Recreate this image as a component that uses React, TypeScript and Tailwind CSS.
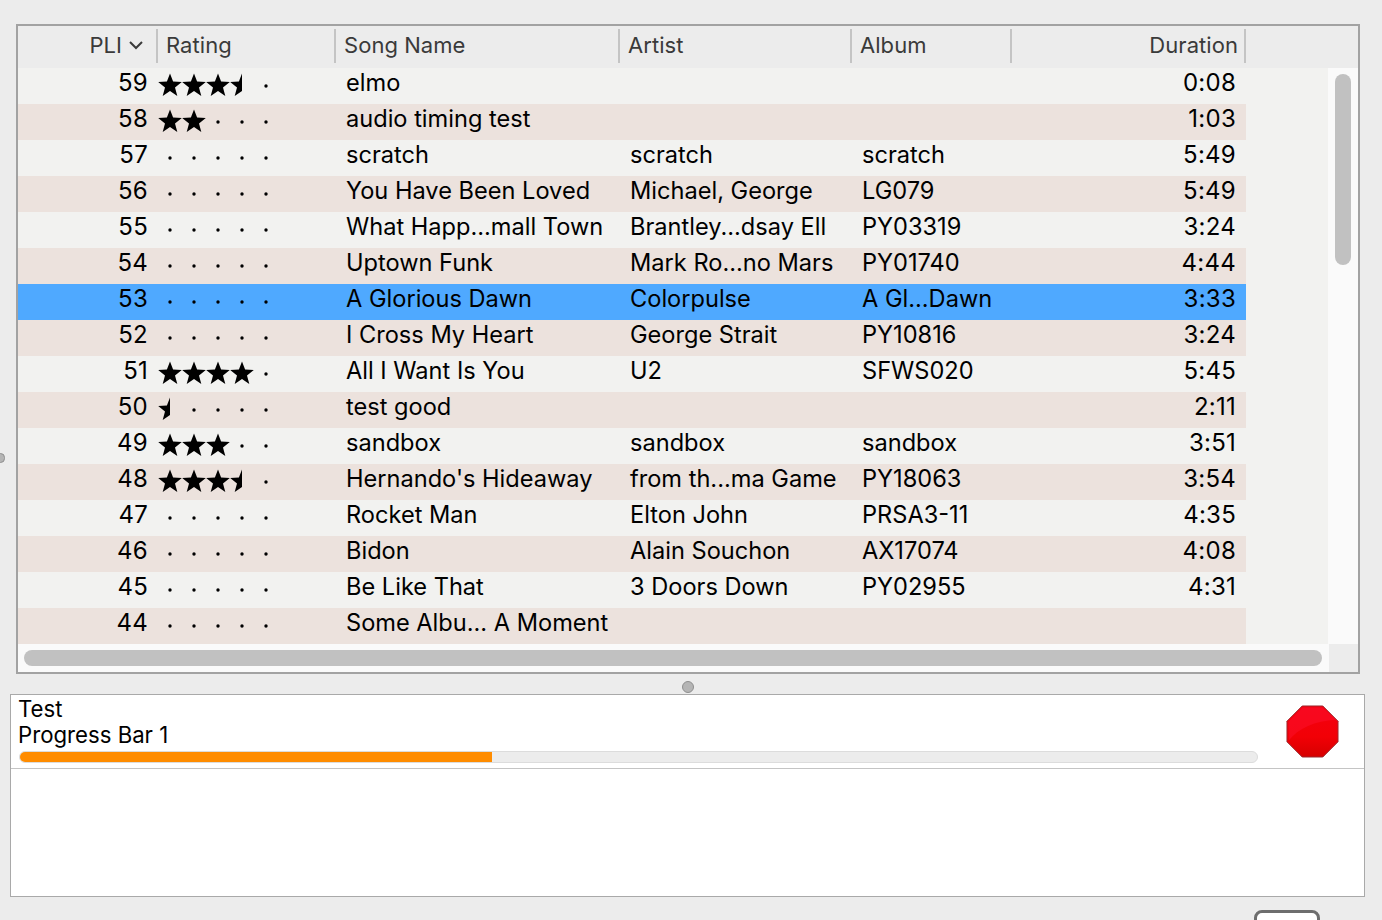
const rows: [string, number, string, string, string, string][] = [
  ["59", 3.5, "elmo", "", "", "0:08"],
  ["58", 2, "audio timing test", "", "", "1:03"],
  ["57", 0, "scratch", "scratch", "scratch", "5:49"],
  ["56", 0, "You Have Been Loved", "Michael, George", "LG079", "5:49"],
  ["55", 0, "What Happ...mall Town", "Brantley...dsay Ell", "PY03319", "3:24"],
  ["54", 0, "Uptown Funk", "Mark Ro...no Mars", "PY01740", "4:44"],
  ["53", 0, "A Glorious Dawn", "Colorpulse", "A Gl...Dawn", "3:33"],
  ["52", 0, "I Cross My Heart", "George Strait", "PY10816", "3:24"],
  ["51", 4, "All I Want Is You", "U2", "SFWS020", "5:45"],
  ["50", 0.5, "test good", "", "", "2:11"],
  ["49", 3, "sandbox", "sandbox", "sandbox", "3:51"],
  ["48", 3.5, "Hernando's Hideaway", "from th...ma Game", "PY18063", "3:54"],
  ["47", 0, "Rocket Man", "Elton John", "PRSA3-11", "4:35"],
  ["46", 0, "Bidon", "Alain Souchon", "AX17074", "4:08"],
  ["45", 0, "Be Like That", "3 Doors Down", "PY02955", "4:31"],
  ["44", 0, "Some Albu... A Moment", "", "", ""],
];

const STAR = "12,0.5 15.1,8.6 23.8,9 17,14.4 19.3,22.9 12,18.1 4.7,22.9 7,14.4 0.2,9 8.9,8.6";
const HALF = "12,0.5 12,18.1 4.7,22.9 7,14.4 0.2,9 8.9,8.6";

function RatingCell({ value }: { value: number }) {
  return (
    <div className="flex w-[120px] pt-[5px]">
      {[0, 1, 2, 3, 4].map((i) => {
        const left = value - i;
        return (
          <svg key={i} width="24" height="24" viewBox="0 0 24 24" className="shrink-0">
            {left >= 1 ? (
              <polygon points={STAR} fill="#000" />
            ) : left > 0 ? (
              <polygon points={HALF} fill="#000" />
            ) : (
              <circle cx="12" cy="13" r="1.7" fill="#000" />
            )}
          </svg>
        );
      })}
    </div>
  );
}

function HeaderCell({ label, width, right }: { label: string; width: string; right?: boolean }) {
  return (
    <div
      className={`flex h-[34px] shrink-0 items-center border-r-2 border-[#c4c4c4] pb-[2px] ${width} ${
        right ? "justify-end pr-[6px]" : "pl-2"
      }`}
    >
      {label}
    </div>
  );
}

function StopIcon() {
  return (
    <svg width="53" height="53" viewBox="0 0 54 54">
      <defs>
        <linearGradient id="stopFill" x1="0" y1="0" x2="0" y2="1">
          <stop offset="0" stopColor="#f40010" />
          <stop offset="0.6" stopColor="#f20006" />
          <stop offset="1" stopColor="#d60000" />
        </linearGradient>
      </defs>
      <polygon
        points="16.5,1 37.5,1 53,16.5 53,37.5 37.5,53 16.5,53 1,37.5 1,16.5"
        fill="url(#stopFill)"
        stroke="#9a2a30"
        strokeWidth="1"
      />
      <path d="M3 36 C12 24 30 16 51 15 L37 2.5 L17 2.5 L2.5 17 Z" fill="#ff1538" opacity="0.4" />
    </svg>
  );
}

export default function App() {
  return (
    <div
      className="relative h-[920px] w-[1382px] overflow-hidden bg-[#ececec] text-[23.6px] leading-none text-black"
      style={{ fontFamily: "Inter, 'Liberation Sans', sans-serif" }}
    >
      <div className="pl-4 pt-6">
        <div className="flex h-[650px] w-[1344px] flex-col border-2 border-[#a2a2a2] bg-[#ececec]">
          <div className="flex h-[42px] items-center pb-[2px] text-[22px] tracking-[0.05px] text-[#3a3a3a]">
            <div className="flex h-[34px] w-[140px] shrink-0 items-center justify-end gap-[6px] border-r-2 border-[#c4c4c4] pb-[2px] pr-3">
              PLI
              <svg width="16" height="10" viewBox="0 0 16 10" fill="none" stroke="#3a3a3a" strokeWidth="2">
                <path d="M2 2 L8 8 L14 2" />
              </svg>
            </div>
            <HeaderCell label="Rating" width="w-[178px]" />
            <HeaderCell label="Song Name" width="w-[284px]" />
            <HeaderCell label="Artist" width="w-[232px]" />
            <HeaderCell label="Album" width="w-[160px]" />
            <HeaderCell label="Duration" width="w-[234px]" right />
          </div>
          <div className="flex min-h-0 flex-1">
            <div className="w-[1311px] bg-[#f2f2f0]">
              {rows.map((r, i) => (
                <div
                  key={r[0]}
                  className={`flex h-9 w-[1228px] pt-[3px] ${
                    r[0] === "53" ? "bg-[#4fa9ff]" : i % 2 === 1 ? "bg-[#ece2dd]" : "bg-[#f2f2f0]"
                  }`}
                >
                  <div className="w-[130px] text-right text-[24px] tracking-[0.25px]">{r[0]}</div>
                  <div className="-mt-[3px] pl-[10px]">
                    <RatingCell value={r[1]} />
                  </div>
                  <div className="w-[352px] whitespace-nowrap pl-[68px]">{r[2]}</div>
                  <div className="w-[232px] whitespace-nowrap">{r[3]}</div>
                  <div className="w-[160px] whitespace-nowrap">{r[4]}</div>
                  <div className="w-[214px] text-right text-[24px] tracking-[0.25px]">{r[5]}</div>
                </div>
              ))}
            </div>
            <div className="flex-1 bg-[#fafafa] px-[7px] pt-[6px]">
              <div className="h-[191px] w-4 rounded-full bg-[#c1c1c1]" />
            </div>
          </div>
          <div className="flex h-7 shrink-0">
            <div className="flex w-[1311px] items-center bg-[#fafafa] pl-[6px]">
              <div className="h-4 w-[1298px] rounded-full bg-[#c1c1c1]" />
            </div>
          </div>
        </div>
      </div>
      <div className="absolute left-0 top-[453px] h-[10px] w-[9px] -translate-x-1 rounded-full border border-[#8f8f8f] bg-[#b5b5b5]" />
      <div className="absolute left-[682px] top-[681px] h-3 w-3 rounded-full border border-[#8f8f8f] bg-[#b5b5b5]" />
      <div className="ml-[10px] mt-5 flex h-[203px] w-[1355px] flex-col border border-[#a9a9a9] bg-white">
        <div className="flex h-[74px] shrink-0 border-b border-[#c4c4c4]">
          <div className="w-[1248px] pl-[7px] text-[22.2px] leading-[26px] tracking-normal">
            <div className="pt-[1px]">Test</div>
            <div>Progress Bar 1</div>
            <div className="ml-[1px] mt-[3px] h-3 w-[1239px] overflow-hidden rounded-full border border-[#dcdcdc] bg-[#ececec]">
              <div className="-m-px h-3 w-[473px] bg-[#ff8c00]" />
            </div>
          </div>
          <div className="pl-[27px] pt-[10px]">
            <StopIcon />
          </div>
        </div>
      </div>
      <div className="ml-[1254px] mt-[13px] h-10 w-[66px] rounded-[8px] border-[3px] border-[#6e6e6e] bg-white" />
    </div>
  );
}
